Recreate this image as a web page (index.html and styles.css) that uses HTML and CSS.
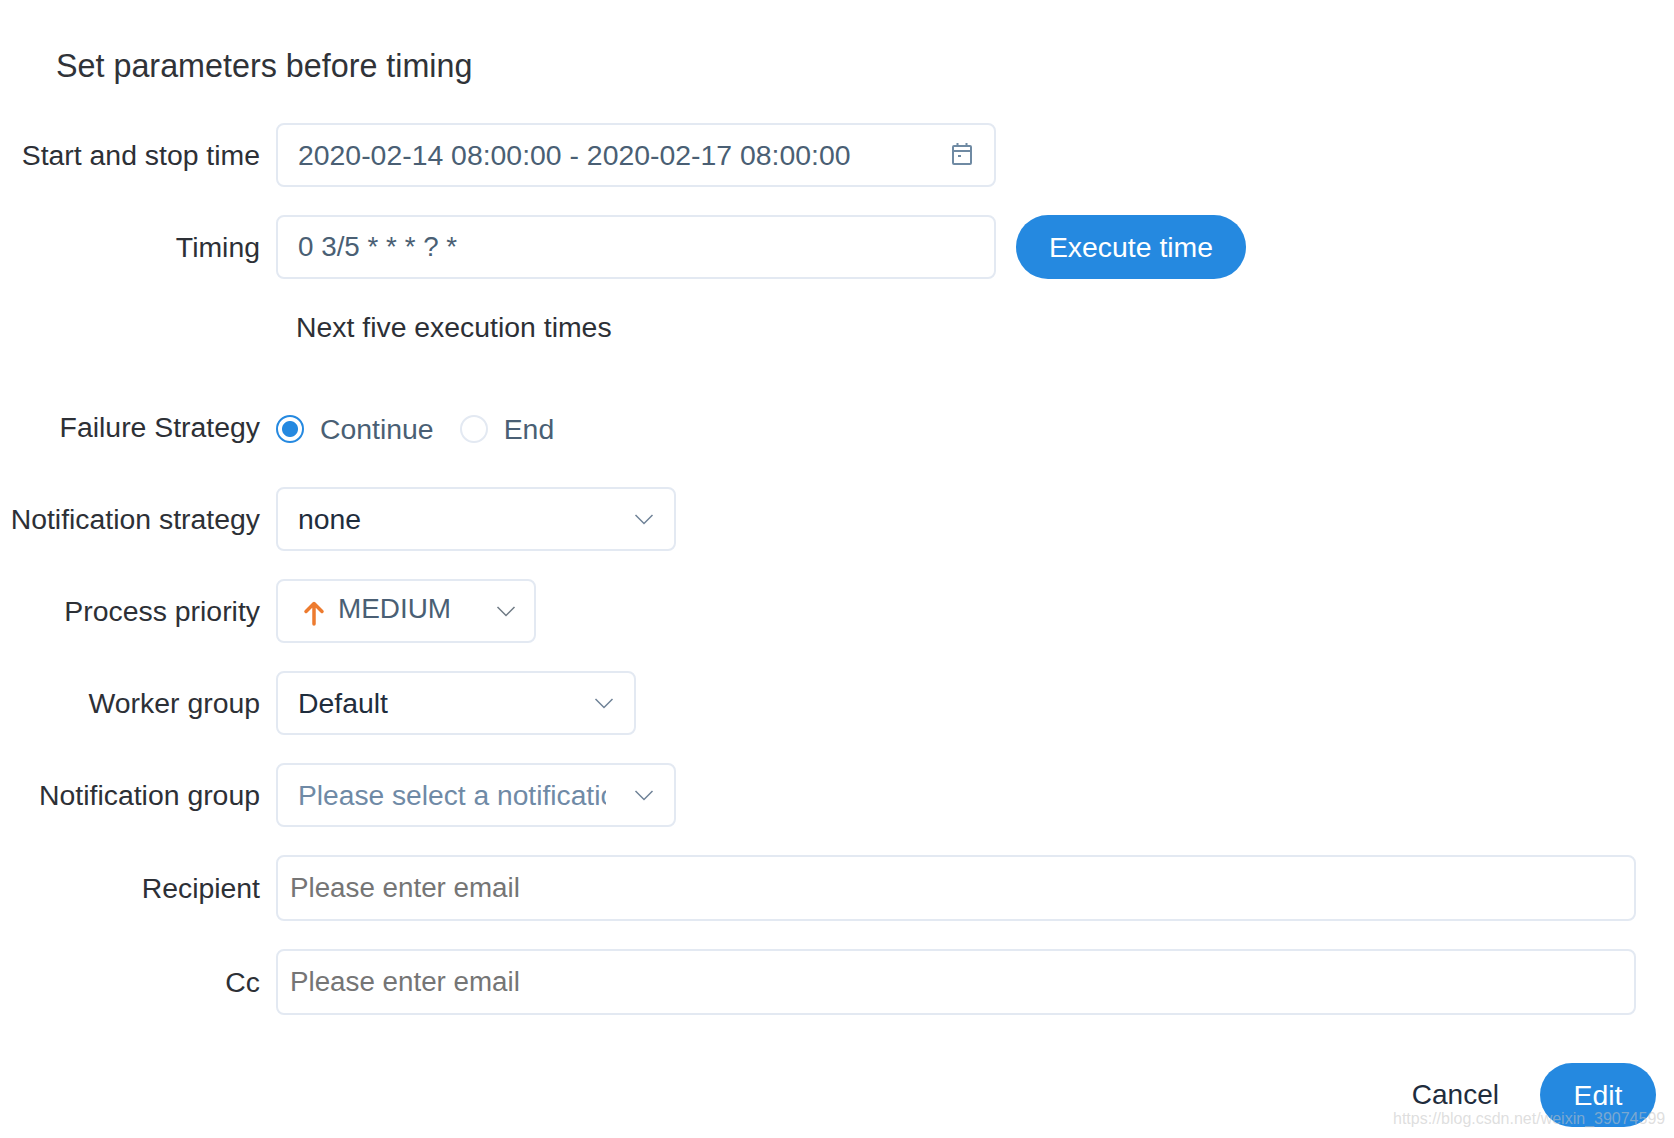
FILE: index.html
```html
<!DOCTYPE html>
<html lang="en">
<head>
    <meta charset="UTF-8">
    <title>Set parameters before timing</title>
    <link rel="stylesheet" href="styles.css">
</head>
<body>

    <div class="page">
        <h2 class="title">Set parameters before timing</h2>

        <div class="row">
            <label class="label">Start and stop time</label>
            <div class="box box-wide">
                <span class="value">2020-02-14 08:00:00 - 2020-02-17 08:00:00</span>
                <svg class="calendar" width="20" height="22" viewBox="0 0 20 22" fill="none" stroke="#6f8aa3" stroke-width="2">
                    <rect x="1" y="3" width="18" height="18" rx="1"/>
                    <path d="M1 8h18M5.500 0v3M14.500 0v3"/>
                    <path d="M6 13h3"/>
                </svg>
            </div>
        </div>

        <div class="row">
            <label class="label">Timing</label>
            <div class="box box-wide">
                <span class="value cron">0 3/5 * * * ? *</span>
            </div>
            <button class="btn btn-execute">Execute time</button>
        </div>

        <div class="next-times">Next five execution times</div>

        <div class="row">
            <label class="label">Failure Strategy</label>
            <div class="radios">
                <span class="radio checked"></span>
                <span class="radio-text">Continue</span>
                <span class="radio"></span>
                <span class="radio-text">End</span>
            </div>
        </div>

        <div class="row">
            <label class="label">Notification strategy</label>
            <div class="box box-select box-400">
                <span class="value dark">none</span>
                <svg class="chevron" width="20" height="11" viewBox="0 0 20 11" fill="none" stroke="#6f8297" stroke-width="1.500"><path d="M1.500 1l8.500 8.500L18.500 1"/></svg>
            </div>
        </div>

        <div class="row">
            <label class="label">Process priority</label>
            <div class="box box-select box-260">
                <svg class="arrow" width="24" height="26" viewBox="0 0 24 26" fill="none" stroke="#ed7b2f" stroke-width="3.500" stroke-linecap="round" stroke-linejoin="round"><path d="M12 24V4M4 11.500l8-8 8 8"/></svg>
                <span class="value priority">MEDIUM</span>
                <svg class="chevron" width="20" height="11" viewBox="0 0 20 11" fill="none" stroke="#6f7a85" stroke-width="1.500"><path d="M1.500 1l8.500 8.500L18.500 1"/></svg>
            </div>
        </div>

        <div class="row">
            <label class="label">Worker group</label>
            <div class="box box-select box-360">
                <span class="value dark">Default</span>
                <svg class="chevron" width="20" height="11" viewBox="0 0 20 11" fill="none" stroke="#6f8297" stroke-width="1.500"><path d="M1.500 1l8.500 8.500L18.500 1"/></svg>
            </div>
        </div>

        <div class="row">
            <label class="label">Notification group</label>
            <div class="box box-select box-400">
                <span class="value muted">Please select a notification group</span>
                <svg class="chevron" width="20" height="11" viewBox="0 0 20 11" fill="none" stroke="#6f8297" stroke-width="1.500"><path d="M1.500 1l8.500 8.500L18.500 1"/></svg>
            </div>
        </div>

        <div class="row">
            <label class="label">Recipient</label>
            <input class="email" type="text" placeholder="Please enter email">
        </div>

        <div class="row">
            <label class="label">Cc</label>
            <input class="email" type="text" placeholder="Please enter email">
        </div>

        <div class="footer">
            <button class="btn-cancel">Cancel</button>
            <button class="btn btn-edit">Edit</button>
        </div>
    </div>

    <div class="watermark">https://blog.csdn.net/weixin_39074599</div>

</body>
</html>
```

FILE: styles.css
```css
body {
    margin: 0;
    background: #fff;
    font-family: "Liberation Sans", Arial, sans-serif;
    font-size: 28px;
    color: #2d3036;
}
.page {
    width: 1636px;
    padding-top: 48px;
}
.title {
    margin: 0 0 39px 56px;
    font-size: 32.300px;
    font-weight: normal;
    line-height: 36px;
    color: #303338;
}
.row {
    display: flex;
    align-items: center;
    margin-bottom: 28px;
}
.label {
    width: 260px;
    margin-right: 16px;
    flex: none;
    text-align: right;
    font-size: 28.400px;
}
.box {
    display: flex;
    align-items: center;
    box-sizing: border-box;
    height: 64px;
    padding: 0 20px;
    background: #fff;
    border: 2px solid #e3e9f2;
    border-radius: 8px;
}
.box-wide {
    width: 720px;
}
.box-400 {
    width: 400px;
}
.box-360 {
    width: 360px;
}
.box-260 {
    width: 260px;
    padding-left: 24px;
    padding-right: 18px;
}
.value {
    flex: 1;
    min-width: 0;
    font-size: 28.400px;
    color: #4a5f74;
    white-space: nowrap;
    overflow: hidden;
}
.cron {
    font-size: 27.800px;
}
.dark {
    color: #1f2d3d;
}
.muted {
    color: #6f8aa6;
    margin-right: 28px;
    font-size: 28.200px;
}
.priority {
    margin-left: 12px;
    font-size: 27.900px;
    position: relative;
    top: -2px;
}
.calendar {
    flex: none;
    margin-right: 2px;
    margin-bottom: 2px;
}
.chevron {
    flex: none;
}
.arrow {
    flex: none;
    margin-top: 3px;
}
.btn {
    height: 64px;
    border: none;
    border-radius: 32px;
    background: #2589e0;
    color: #fff;
    font-family: inherit;
    font-size: 28.400px;
    cursor: pointer;
}
.btn-execute {
    width: 230px;
    margin-left: 20px;
}
.next-times {
    height: 40px;
    margin: 0 0 48px 296px;
    line-height: 40px;
    font-size: 28.400px;
    color: #2d3036;
}
.radios {
    display: flex;
    align-items: center;
    height: 64px;
    padding-top: 3px;
    box-sizing: border-box;
}
.radio {
    box-sizing: border-box;
    width: 28px;
    height: 28px;
    border: 2px solid #e3e9f2;
    border-radius: 50%;
    margin-right: 16px;
}
.radio.checked {
    border-color: #2589e0;
    background: radial-gradient(circle, #2589e0 0 7.500px, #fff 8.500px);
}
.radio-text {
    margin-right: 26px;
    font-size: 28.400px;
    color: #4a5f74;
    position: relative;
    top: 1px;
}
.email {
    box-sizing: border-box;
    flex: 1;
    height: 66px;
    padding: 0 12px;
    border: 2px solid #e3e9f2;
    border-radius: 8px;
    outline: none;
    font-family: inherit;
    font-size: 27.750px;
    color: #475669;
}
.email::placeholder {
    color: #757575;
    opacity: 1;
}
.footer {
    display: flex;
    justify-content: flex-end;
    align-items: center;
    margin-top: 48px;
    margin-right: -20px;
}
.btn-cancel {
    margin-right: 41px;
    padding: 0;
    border: none;
    background: none;
    font-family: inherit;
    font-size: 28px;
    color: #1f2d3d;
    cursor: pointer;
}
.btn-edit {
    width: 116px;
}
.watermark {
    position: absolute;
    left: 1393px;
    top: 1109px;
    font-size: 16px;
    line-height: 20px;
    white-space: nowrap;
    color: rgba(195, 195, 195, 0.55);
}
```
